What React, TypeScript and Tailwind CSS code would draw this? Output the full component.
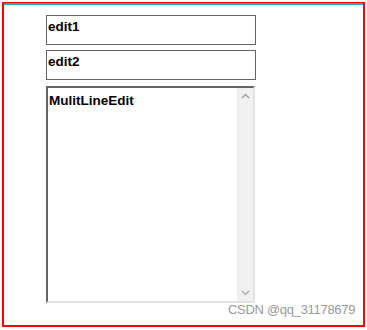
export default function App() {
  return (
    <div className="relative h-[330px] w-[367px] overflow-hidden bg-white" style={{ fontFamily: '"Liberation Sans", Arial, sans-serif' }}>
      <div className="ml-[2px] mt-[2px] flex h-[325px] w-[363px] flex-col border-x-2 border-b-2 border-t border-[#ff0000]">
        <div className="h-[2px] w-full bg-[#12aec3]" />
        <div className="ml-[42px] mt-[10px] flex flex-col">
          <div className="h-[30px] w-[210px] border border-[#646464] px-[1px] pt-[3px] text-[13.5px] font-bold leading-[15px] text-black">
            edit1
          </div>
          <div className="mt-[5px] h-[30px] w-[210px] border border-[#646464] px-[1px] pt-[3px] text-[13.5px] font-bold leading-[15px] text-black">
            edit2
          </div>
          <div className="mt-[6px] flex h-[217px] w-[209px] border-2 border-t-[#646464] border-l-[#646464] border-r-[#e3e3e3] border-b-[#e3e3e3]">
            <div className="flex-1 pl-[1px] pt-[5px] text-[13.5px] font-bold leading-[15px] text-black">MulitLineEdit</div>
            <div className="flex w-[16px] flex-col items-center justify-between bg-[#f0f0f0] py-[5px]">
              <svg width="9" height="6" viewBox="0 0 9 6">
                <path d="M1 5 L4.5 1.5 L8 5" fill="none" stroke="#a3a3a3" strokeWidth="1.5" />
              </svg>
              <svg width="9" height="6" viewBox="0 0 9 6">
                <path d="M1 1 L4.5 4.5 L8 1" fill="none" stroke="#a3a3a3" strokeWidth="1.2" />
              </svg>
            </div>
          </div>
        </div>
      </div>
      <div className="absolute left-[228px] top-[301px] whitespace-nowrap text-[13px] leading-[18px] tracking-[-0.3px] text-[#9a9a9a]">
        CSDN @qq_31178679
      </div>
    </div>
  )
}
